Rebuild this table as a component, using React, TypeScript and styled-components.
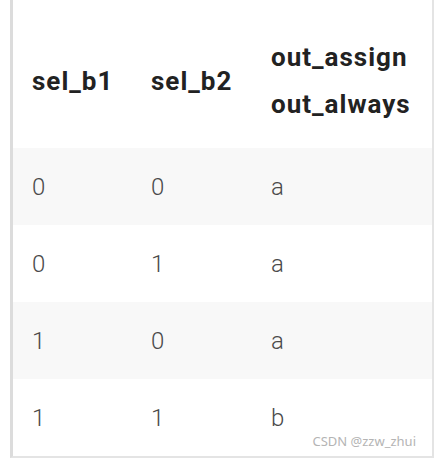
import React from 'react'
import styled, { createGlobalStyle } from 'styled-components'

const GlobalStyle = createGlobalStyle`
  html, body {
    margin: 0;
    padding: 0;
    background: #ffffff;
  }
`

const rows = [
  ['0', '0', 'a'],
  ['0', '1', 'a'],
  ['1', '0', 'a'],
  ['1', '1', 'b'],
]

const Page = styled.div`
  padding-left: 10px;
  width: 424px;
`

const Frame = styled.div`
  position: relative;
  border-left: 3px solid #dcdcdc;
  border-right: 2px solid #e4e4e4;
  border-bottom: 2px solid #e4e4e4;
`

const Table = styled.table`
  width: 100%;
  border-collapse: collapse;
  font-family: Roboto, 'Liberation Sans', sans-serif;
`

const HeadCell = styled.th`
  height: 134px;
  padding: 14px 0 0 19px;
  text-align: left;
  vertical-align: middle;
  font-size: 26px;
  font-weight: 700;
  letter-spacing: 1px;
  line-height: 47px;
  color: #222222;
`

const Row = styled.tr<{ $shaded: boolean }>`
  background: ${(p) => (p.$shaded ? '#f8f8f8' : '#ffffff')};
`

const Cell = styled.td`
  height: 77px;
  padding: 0 0 0 19px;
  vertical-align: middle;
  font-size: 24px;
  line-height: 28px;
  font-weight: 300;
  color: #4a4a4a;
`

const Watermark = styled.span`
  position: absolute;
  right: 16px;
  bottom: 6px;
  font-family: 'Noto Sans', 'Liberation Sans', sans-serif;
  font-size: 13px;
  color: #b4b4b4;
`

export default function App() {
  return (
    <Page>
      <GlobalStyle />
      <Frame>
        <Table>
          <colgroup>
            <col style={{ width: 119 }} />
            <col style={{ width: 120 }} />
            <col />
          </colgroup>
          <thead>
            <tr>
              <HeadCell>sel_b1</HeadCell>
              <HeadCell>sel_b2</HeadCell>
              <HeadCell>
                out_assign
                <br />
                out_always
              </HeadCell>
            </tr>
          </thead>
          <tbody>
            {rows.map((r, i) => (
              <Row key={i} $shaded={i % 2 === 0}>
                {r.map((v, j) => (
                  <Cell key={j}>{v}</Cell>
                ))}
              </Row>
            ))}
          </tbody>
        </Table>
        <Watermark>CSDN @zzw_zhui</Watermark>
      </Frame>
    </Page>
  )
}
